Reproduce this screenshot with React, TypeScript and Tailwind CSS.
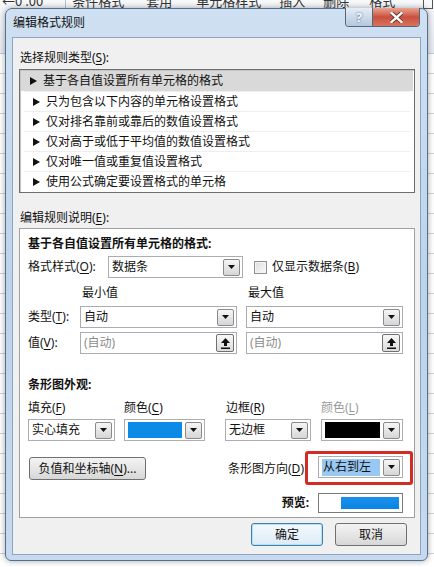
import React from 'react';

const Key = ({ k }: { k: string }) => <span className="underline underline-offset-[2px]">{k}</span>;

const Caret = () => (
    <svg width="7" height="4" viewBox="0 0 7 4">
        <path d="M0 0H7L3.5 4Z" fill="#111" />
    </svg>
);

const DropBtn = () => (
    <div className="w-[17px] h-[17px] shrink-0 border border-[#8a8a8a] rounded-[2px] bg-gradient-to-b from-[#f6f6f6] to-[#d6d6d6] flex items-center justify-center">
        <Caret />
    </div>
);

const UpBtn = () => (
    <div className="w-[18px] h-[18px] shrink-0 border border-[#707070] rounded-[2px] bg-gradient-to-b from-[#f7f7f7] to-[#dcdcdc] flex items-center justify-center">
        <svg width="9" height="11" viewBox="0 0 9 11">
            <path d="M4.5 0L9 5H6V8H3V5H0Z" fill="#111" />
            <rect x="0" y="9.5" width="9" height="1.5" fill="#111" />
        </svg>
    </div>
);

const Combo = ({ className, children }: { className: string; children: React.ReactNode }) => (
    <div className={`h-[22px] flex items-center border border-[#abadb3] bg-white pl-[3px] pr-[2px] gap-[3px] ${className}`}>
        <div className="flex-1 h-full flex items-center min-w-0">{children}</div>
        <DropBtn />
    </div>
);

const rules = [
    '基于各自值设置所有单元格的格式',
    '只为包含以下内容的单元格设置格式',
    '仅对排名靠前或靠后的数值设置格式',
    '仅对高于或低于平均值的数值设置格式',
    '仅对唯一值或重复值设置格式',
    '使用公式确定要设置格式的单元格',
];

export default function App() {
    return (
        <div className="relative w-[434px] h-[567px] overflow-hidden bg-white font-['Noto_Sans','Noto_Sans_CJK_SC',sans-serif] text-[12px] leading-[16px] text-[#111]">
            {/* Excel behind the dialog */}
            <div className="h-[54px] bg-gradient-to-b from-[#f8f9fb] to-[#e6ebf2] border-b border-[#c5cdd8] overflow-hidden">
                <div className="flex items-center -mt-[7px] h-[16px] text-[13px] text-[#333] font-['Noto_Sans_CJK_SC',sans-serif]">
                    <span className="ml-[2px]">←0 .00</span>
                    <span className="ml-[22px] h-[16px] border-l border-[#b8c2cf]" />
                    <span className="ml-[6px]">条件格式</span>
                    <span className="ml-[22px]">套用</span>
                    <span className="ml-[24px]">单元格样式</span>
                    <span className="ml-[18px]">插入</span>
                    <span className="ml-[18px]">删除</span>
                    <span className="ml-[20px]">格式</span>
                    <span className="ml-[28px] w-[10px] h-[10px] border border-[#555] mt-[6px]" />
                </div>
            </div>
            <div className="h-[513px] bg-[repeating-linear-gradient(to_bottom,#ffffff_0px,#ffffff_19px,#d4d4d4_19px,#d4d4d4_20px)]" />

            {/* Dialog window */}
            <div className="absolute left-[5px] top-[8px] w-[423px] h-[553px] rounded-t-[7px] rounded-b-[6px] border border-[#53708f] bg-gradient-to-b from-[#cfe0f2] via-[#bdd3ea] to-[#c6d9ee] shadow-[0_0_6px_rgba(0,0,0,0.35)] flex flex-col">
                {/* caption buttons */}
                <div className="absolute top-[-1px] right-[7px] flex h-[19px] rounded-b-[4px] border border-t-0 border-[#55677d] overflow-hidden">
                    <div className="w-[27px] bg-gradient-to-b from-[#e4edf7] to-[#b4c8de] flex items-center justify-center border-r border-[#55677d] text-[13px] font-bold text-[#f4f7fb] [text-shadow:0_0_2px_#3d4e63]">
                        ?
                    </div>
                    <div className="w-[46px] bg-gradient-to-b from-[#e8a493] via-[#c94f3f] to-[#d9745d] flex items-center justify-center">
                        <svg width="13" height="11" viewBox="0 0 13 11">
                            <path d="M1.5 1L11.5 10M11.5 1L1.5 10" stroke="#5a1d16" strokeWidth="4" strokeLinecap="square" />
                            <path d="M1.5 1L11.5 10M11.5 1L1.5 10" stroke="#ffffff" strokeWidth="2.4" strokeLinecap="square" />
                        </svg>
                    </div>
                </div>

                <div className="h-[28px] pl-[7px] flex items-center text-[12px]">编辑格式规则</div>

                {/* client area */}
                <div className="mx-[6px] h-[518px] border border-[#8ba5c2] bg-[#f0f0f0] flex flex-col">
                    <div className="mt-[12px] ml-[7px]">
                        选择规则类型(<Key k="S" />):
                    </div>
                    <div className="mt-[3px] ml-[6px] w-[396px] h-[124px] border border-[#6e6e6e] shadow-[inset_1px_1px_0_#c4c4c4] bg-white p-[1px] flex flex-col">
                        {rules.map((r, i) => (
                            <div
                                key={r}
                                className={`h-[20px] shrink-0 flex items-center pl-[9px] gap-[6px] ${i === 0 ? 'bg-[#d9d9d9]' : 'border-t border-[#eeeeee] mx-[3px] pl-[6px]'}`}
                            >
                                <svg width="7" height="8" viewBox="0 0 7 8">
                                    <path d="M0 0L7 4L0 8Z" fill="#111" />
                                </svg>
                                <span>{r}</span>
                            </div>
                        ))}
                    </div>

                    <div className="mt-[17px] ml-[7px]">
                        编辑规则说明(<Key k="E" />):
                    </div>
                    <div className="mt-[2px] ml-[6px] w-[396px] h-[290px] border border-[#a0a0a0] bg-white flex flex-col pl-[8px]">
                        <div className="mt-[7px] font-bold">基于各自值设置所有单元格的格式:</div>

                        <div className="mt-[4px] flex items-center">
                            <div className="w-[80px]">格式样式(<Key k="O" />):</div>
                            <Combo className="w-[135px]">数据条</Combo>
                            <div className="ml-[11px] w-[13px] h-[13px] border border-[#8f8f8f] bg-gradient-to-br from-[#dcdcdc] to-[#fbfbfb] shadow-[inset_0_0_0_1px_#f4f4f4]" />
                            <div className="ml-[5px]">仅显示数据条(<Key k="B" />)</div>
                        </div>

                        <div className="mt-[7px] flex">
                            <div className="w-[54px]" />
                            <div className="w-[157px]">最小值</div>
                            <div className="ml-[9px] w-[157px]">最大值</div>
                        </div>

                        <div className="mt-[5px] flex items-center">
                            <div className="w-[52px]">类型(<Key k="T" />):</div>
                            <Combo className="w-[157px]">自动</Combo>
                            <Combo className="ml-[9px] w-[157px]">自动</Combo>
                        </div>

                        <div className="mt-[4px] flex items-center">
                            <div className="w-[52px]">值(<Key k="V" />):</div>
                            <div className="w-[157px] h-[22px] border border-[#abadb3] bg-white flex items-center pl-[3px] pr-[2px]">
                                <span className="flex-1 text-[#8c8c8c]">(自动)</span>
                                <UpBtn />
                            </div>
                            <div className="ml-[9px] w-[157px] h-[22px] border border-[#abadb3] bg-white flex items-center pl-[3px] pr-[2px]">
                                <span className="flex-1 text-[#8c8c8c]">(自动)</span>
                                <UpBtn />
                            </div>
                        </div>

                        <div className="mt-[23px] font-bold">条形图外观:</div>

                        <div className="mt-[7px] flex">
                            <div className="w-[87px] flex flex-col">
                                <div>填充(<Key k="F" />)</div>
                                <Combo className="mt-[3px] w-[87px]">实心填充</Combo>
                            </div>
                            <div className="ml-[9px] w-[81px] flex flex-col">
                                <div>颜色(<Key k="C" />)</div>
                                <Combo className="mt-[3px] w-[81px]">
                                    <div className="w-full h-[16px] bg-[#0b8ae6]" />
                                </Combo>
                            </div>
                            <div className="ml-[20px] w-[86px] flex flex-col">
                                <div className="pl-[1px]">边框(<Key k="R" />)</div>
                                <Combo className="mt-[3px] w-[86px]">无边框</Combo>
                            </div>
                            <div className="ml-[10px] w-[82px] flex flex-col">
                                <div className="text-[#9a9a9a]">颜色(<Key k="L" />)</div>
                                <Combo className="mt-[3px] w-[82px]">
                                    <div className="w-full h-[16px] bg-black" />
                                </Combo>
                            </div>
                        </div>

                        <div className="mt-[15px] flex items-start">
                            <div className="mt-[1px] ml-[1px] w-[117px] h-[23px] border border-[#707070] rounded-[3px] bg-gradient-to-b from-[#f3f3f3] via-[#e6e6e6] to-[#d7d7d7] flex items-center justify-center">
                                负值和坐标轴(<Key k="N" />)...
                            </div>
                            <div className="ml-[82px] w-[90px] mt-[5px]">条形图方向(<Key k="D" />)</div>
                            <div className="relative">
                                <div className="absolute -left-[13px] -top-[5px] w-[108px] h-[34px] border-[3px] border-[#d52b26] rounded-[3px]" />
                                <Combo className="w-[85px]">
                                    <span className="bg-[#99c9f3] px-[1px] h-[17px] flex items-center w-full">从右到左</span>
                                </Combo>
                            </div>
                        </div>

                        <div className="mt-[13px] flex items-center justify-end pr-[11px]">
                            <div className="font-bold">预览:</div>
                            <div className="ml-[9px] w-[85px] h-[20px] border border-[#7a7a7a] bg-white flex items-center justify-end pr-[3px]">
                                <div className="w-[58px] h-[12px] bg-gradient-to-b from-[#1a92ec] to-[#0a83e2]" />
                            </div>
                        </div>
                    </div>

                    <div className="mt-[5px] flex justify-end pr-[13px] gap-[12px]">
                        <div className="w-[72px] h-[23px] rounded-[3px] border border-[#3c7fb1] bg-gradient-to-b from-[#f4f9fd] to-[#dcebf6] shadow-[inset_0_0_0_1px_#b6e0f8] flex items-center justify-center">
                            确定
                        </div>
                        <div className="w-[72px] h-[23px] rounded-[3px] border border-[#707070] bg-gradient-to-b from-[#f3f3f3] via-[#e6e6e6] to-[#d7d7d7] flex items-center justify-center">
                            取消
                        </div>
                    </div>
                </div>
            </div>
        </div>
    );
}
